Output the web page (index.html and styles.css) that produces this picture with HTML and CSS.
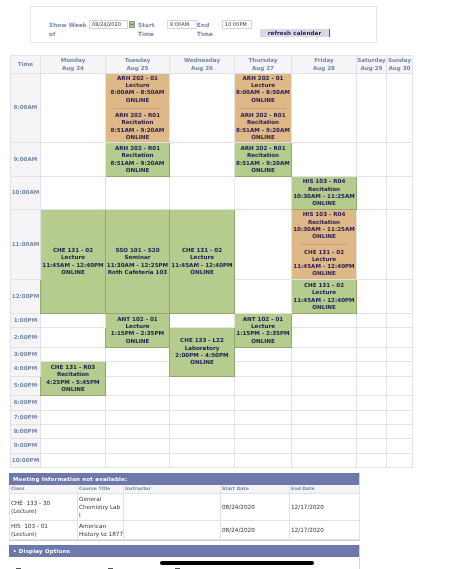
FILE: index.html
```html
<!DOCTYPE html>
<html lang="en">
<head>
<meta charset="utf-8">
<title>Weekly Schedule</title>
<link rel="stylesheet" href="styles.css">
</head>
<body>
<form class="filter">
  <span class="flabel lab-week">Show Week of</span>
  <span class="field field-date">08/24/2020</span>
  <svg class="cal-icon" viewBox="0 0 6 7" aria-hidden="true"><rect x="0.5" y="0.5" width="5" height="6" fill="#c3cfa6" stroke="#8d9a80"/><path d="M2 2v3M4 2v3M2 3.5h2" stroke="#4c5a58" stroke-width="0.6" fill="none"/></svg>
  <span class="flabel lab-start">Start Time</span>
  <span class="field field-time">8:00AM</span>
  <span class="flabel lab-end">End Time</span>
  <span class="field field-time">10:00PM</span>
  <button type="button" class="refresh">refresh calendar</button>
</form>

<table class="cal">
  <colgroup>
    <col class="c-time"><col class="c-mon"><col class="c-tue"><col class="c-wed"><col class="c-thu"><col class="c-fri"><col class="c-sat"><col class="c-sun">
  </colgroup>
  <thead>
    <tr class="r-head">
      <th>Time</th><th>Monday<br>Aug 24</th><th>Tuesday<br>Aug 25</th><th>Wednesday<br>Aug 26</th><th>Thursday<br>Aug 27</th><th>Friday<br>Aug 28</th><th>Saturday<br>Aug 29</th><th>Sunday<br>Aug 30</th>
    </tr>
  </thead>
  <tbody>
    <tr class="r-8">
      <th>8:00AM</th><td></td>
      <td class="ev conflict">
        <div>ARH 202 - 01<br>Lecture<br>8:00AM - 8:50AM<br>ONLINE</div><hr>
        <div>ARH 202 - R01<br>Recitation<br>8:51AM - 9:20AM<br>ONLINE</div>
      </td>
      <td></td>
      <td class="ev conflict">
        <div>ARH 202 - 01<br>Lecture<br>8:00AM - 8:50AM<br>ONLINE</div><hr>
        <div>ARH 202 - R01<br>Recitation<br>8:51AM - 9:20AM<br>ONLINE</div>
      </td>
      <td></td><td></td><td></td>
    </tr>
    <tr class="r-9">
      <th>9:00AM</th><td></td>
      <td class="ev">ARH 202 - R01<br>Recitation<br>8:51AM - 9:20AM<br>ONLINE</td>
      <td></td>
      <td class="ev">ARH 202 - R01<br>Recitation<br>8:51AM - 9:20AM<br>ONLINE</td>
      <td></td><td></td><td></td>
    </tr>
    <tr class="r-10">
      <th>10:00AM</th><td></td><td></td><td></td><td></td>
      <td class="ev">HIS 103 - R04<br>Recitation<br>10:30AM - 11:25AM<br>ONLINE</td>
      <td></td><td></td>
    </tr>
    <tr class="r-11">
      <th>11:00AM</th>
      <td class="ev" rowspan="2">CHE 131 - 02<br>Lecture<br>11:45AM - 12:40PM<br>ONLINE</td>
      <td class="ev" rowspan="2">SSO 101 - S20<br>Seminar<br>11:30AM - 12:25PM<br>Roth Cafeteria 103</td>
      <td class="ev" rowspan="2">CHE 131 - 02<br>Lecture<br>11:45AM - 12:40PM<br>ONLINE</td>
      <td></td>
      <td class="ev conflict">
        <div>HIS 103 - R04<br>Recitation<br>10:30AM - 11:25AM<br>ONLINE</div><hr>
        <div>CHE 131 - 02<br>Lecture<br>11:45AM - 12:40PM<br>ONLINE</div>
      </td>
      <td></td><td></td>
    </tr>
    <tr class="r-12">
      <th>12:00PM</th><td></td>
      <td class="ev">CHE 131 - 02<br>Lecture<br>11:45AM - 12:40PM<br>ONLINE</td>
      <td></td><td></td>
    </tr>
    <tr class="r-s">
      <th>1:00PM</th><td></td>
      <td class="ev" rowspan="2">ANT 102 - 01<br>Lecture<br>1:15PM - 2:35PM<br>ONLINE</td>
      <td></td>
      <td class="ev" rowspan="2">ANT 102 - 01<br>Lecture<br>1:15PM - 2:35PM<br>ONLINE</td>
      <td></td><td></td><td></td>
    </tr>
    <tr class="r-m">
      <th>2:00PM</th><td></td>
      <td class="ev" rowspan="3">CHE 133 - L22<br>Laboratory<br>2:00PM - 4:50PM<br>ONLINE</td>
      <td></td><td></td><td></td>
    </tr>
    <tr class="r-s">
      <th>3:00PM</th><td></td><td></td><td></td><td></td><td></td><td></td>
    </tr>
    <tr class="r-s">
      <th>4:00PM</th>
      <td class="ev" rowspan="2">CHE 131 - R03<br>Recitation<br>4:25PM - 5:45PM<br>ONLINE</td>
      <td></td><td></td><td></td><td></td><td></td>
    </tr>
    <tr class="r-m">
      <th>5:00PM</th><td></td><td></td><td></td><td></td><td></td><td></td>
    </tr>
    <tr class="r-s"><th>6:00PM</th><td></td><td></td><td></td><td></td><td></td><td></td><td></td></tr>
    <tr class="r-s"><th>7:00PM</th><td></td><td></td><td></td><td></td><td></td><td></td><td></td></tr>
    <tr class="r-s"><th>8:00PM</th><td></td><td></td><td></td><td></td><td></td><td></td><td></td></tr>
    <tr class="r-s"><th>9:00PM</th><td></td><td></td><td></td><td></td><td></td><td></td><td></td></tr>
    <tr class="r-s"><th>10:00PM</th><td></td><td></td><td></td><td></td><td></td><td></td><td></td></tr>
  </tbody>
</table>

<section class="panel">
  <h2 class="panel-title">Meeting Information not available:</h2>
  <table class="info">
    <colgroup><col class="i-class"><col class="i-title"><col class="i-inst"><col class="i-start"><col class="i-end"></colgroup>
    <thead>
      <tr><th>Class</th><th>Course Title</th><th>Instructor</th><th>Start Date</th><th>End Date</th></tr>
    </thead>
    <tbody>
      <tr class="i-r1"><td>CHE&nbsp; 133 - 30<br>(Lecture)</td><td>General<br>Chemistry Lab<br>I</td><td></td><td>08/24/2020</td><td>12/17/2020</td></tr>
      <tr class="i-r2"><td>HIS&nbsp; 103 - 01<br>(Lecture)</td><td>American<br>History to 1877</td><td></td><td>08/24/2020</td><td>12/17/2020</td></tr>
    </tbody>
  </table>
</section>

<section class="panel options">
  <h2 class="panel-title">• Display Options</h2>
  <div class="options-body">
    <span class="redact"></span>
    <div class="ticks"><span class="tick"></span><span class="tick"></span><span class="tick"></span></div>
  </div>
</section>
</body>
</html>
```

FILE: styles.css
```css
html, body {
  margin: 0;
  padding: 0;
  background: #fff;
  height: 569px;
  overflow: hidden;
}
body {
  font-family: "DejaVu Sans", Verdana, sans-serif;
  color: #1c1c50;
  filter: blur(0.4px);
}

/* Filter form */
.filter {
  box-sizing: border-box;
  width: 347px;
  height: 37px;
  margin: 6px 0 0 30px;
  padding: 13px 0 0 18px;
  border: 1px solid #e4e4ea;
  display: flex;
  align-items: flex-start;
}
.flabel {
  font-size: 5.7px;
  font-weight: bold;
  line-height: 9.4px;
  color: #7486a6;
  letter-spacing: 0.1px;
  padding-top: 0.5px;
}
.lab-week { width: 40px; }
.lab-start { width: 29px; margin-left: 3px; }
.lab-end { width: 25px; }
.field {
  box-sizing: border-box;
  height: 9px;
  border: 1px solid #d4d4da;
  font-size: 5px;
  line-height: 7px;
  padding-left: 2px;
  color: #334;
  background: #fff;
}
.field-date { width: 39px; }
.field-time { width: 30px; }
.cal-icon {
  width: 6px;
  height: 7px;
  margin: 1px 0 0 1px;
  flex: none;
}
.refresh {
  box-sizing: border-box;
  width: 70px;
  height: 8px;
  margin: 9px 0 0 8px;
  padding: 0;
  border: 0;
  border-right: 1px solid #555a70;
  background: #d9d9e6;
  color: #1c1c50;
  font-family: inherit;
  font-size: 5.6px;
  font-weight: bold;
  line-height: 8px;
  letter-spacing: 0.1px;
}

/* Calendar */
.cal {
  table-layout: fixed;
  border-collapse: collapse;
  width: 402px;
  margin: 12px 0 0 10px;
  font-size: 5.6px;
  line-height: 7.33px;
}
.c-time { width: 30px; }
.c-mon { width: 65px; }
.c-tue { width: 64px; }
.c-wed { width: 65px; }
.c-thu { width: 57px; }
.c-fri { width: 65px; }
.c-sat { width: 30px; }
.c-sun { width: 26px; }
.cal th, .cal td {
  border: 1px solid #e2e2e6;
  padding: 0;
  text-align: center;
  vertical-align: middle;
  overflow: visible;
  white-space: nowrap;
}
.cal th {
  background: #f5f5f7;
  color: #7486a6;
  font-weight: bold;
}
.cal td { background: #fff; }
.cal .ev {
  background: #b6cc8f;
  border: 1px solid #8fa86c;
  color: #1c1c50;
  font-weight: bold;
}
.cal .conflict {
  background: #deb887;
  border: 1px solid #e2e2e6;
  color: #2a1a50;
}
.cal hr {
  width: 48px;
  height: 0;
  margin: 3.5px auto;
  border: 0;
  border-top: 1px solid #c3a384;
}
.r-head { height: 18px; }
.r-8 { height: 69px; }
.r-9 { height: 34px; }
.r-10 { height: 33px; }
.r-11 { height: 70px; }
.r-12 { height: 34px; }
.r-s { height: 14.4px; }
.r-m { height: 19.5px; }

/* Panels */
.panel {
  box-sizing: border-box;
  width: 351px;
  margin: 5px 0 0 9px;
  border-right: 1px solid #d2d2d8;
  border-bottom: 1px solid #d2d2d8;
}
.panel-title {
  margin: 0;
  height: 12px;
  background: #6f78ab;
  color: #fff;
  font-size: 5.4px;
  font-weight: bold;
  line-height: 12px;
  padding-left: 4px;
  letter-spacing: 0.25px;
}
.info {
  table-layout: fixed;
  border-collapse: collapse;
  width: 350px;
  font-size: 5.7px;
  line-height: 8.2px;
  color: #333;
}
.i-class { width: 68px; }
.i-title { width: 46px; }
.i-inst { width: 97px; }
.i-start { width: 69px; }
.i-end { width: 70px; }
.info th, .info td {
  padding: 0 0 0 1px;
  text-align: left;
  border: 1px solid #e2e2e6;
  border-top: 0;
  font-weight: normal;
  white-space: nowrap;
}
.info th {
  height: 8px;
  background: #f5f5f7;
  color: #7486a6;
  font-size: 4.6px;
  font-weight: bold;
  line-height: 8px;
}
.i-r1 { height: 27px; }
.i-r2 { height: 19px; }
.options {
  margin-top: 4px;
  border-bottom: 0;
  height: 30px;
}
.options-body {
  height: 18px;
  padding-top: 4px;
  box-sizing: border-box;
}
.redact {
  display: block;
  width: 154px;
  height: 4px;
  margin-left: 151px;
  border-radius: 2px;
  background: #000;
}
.ticks {
  display: flex;
  margin: 3px 0 0 7px;
}
.tick {
  width: 5px;
  height: 3px;
  background: #555;
}
.tick + .tick { margin-left: 87px; }
.tick + .tick + .tick { margin-left: 62px; }
```
